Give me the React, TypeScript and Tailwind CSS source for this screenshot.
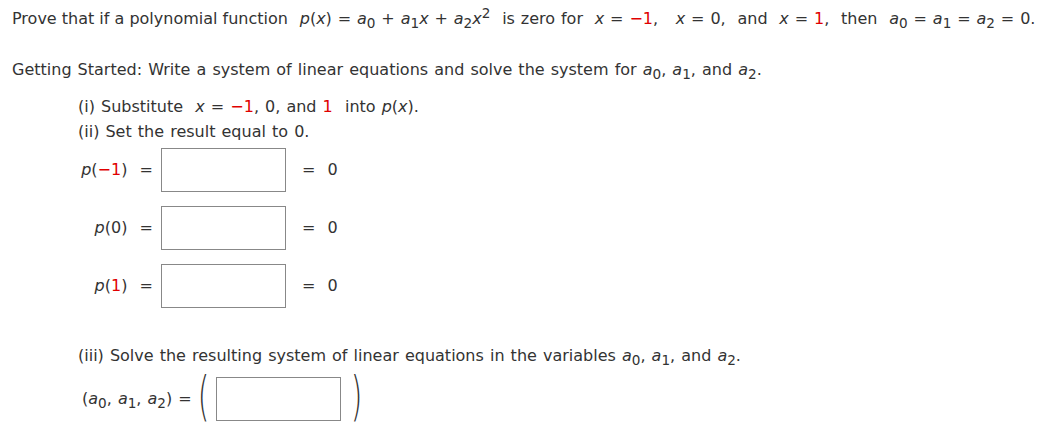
import React from "react";

const R = ({ children }: { children: React.ReactNode }) => (
  <span className="text-[#e00000]">{children}</span>
);
const I = ({ children }: { children: React.ReactNode }) => (
  <span className="italic">{children}</span>
);
const Sub = ({ children }: { children: React.ReactNode }) => (
  <span className="text-[0.85em] relative top-[0.3em] leading-none">{children}</span>
);
const Sup = ({ children }: { children: React.ReactNode }) => (
  <span className="text-[0.85em] relative -top-[0.45em] leading-none">{children}</span>
);

const Box = () => <div className="w-[125px] h-[44px] border border-[#888] bg-white" />;

const Paren = ({ c }: { c: string }) => (
  <span className="inline-block text-[54px] leading-[50px] font-light scale-x-[0.55] text-[#333]">
    {c}
  </span>
);

export default function App() {
  return (
    <div
      className="w-[1058px] h-[440px] bg-white text-[#333] text-[16px] leading-[24px] pl-[12px] pt-[7px] [word-spacing:1px]"
      style={{ fontFamily: '"DejaVu Sans", Verdana, sans-serif' }}
    >
      <p className="whitespace-nowrap">
        <span className="[word-spacing:0px]">Prove that if a polynomial function</span>
        <span className="[word-spacing:0.8px]">
          &nbsp; <I>p</I>(<I>x</I>) = <I>a</I>
          <Sub>0</Sub> + <I>a</I>
          <Sub>1</Sub>
          <I>x</I> + <I>a</I>
          <Sub>2</Sub>
          <I>x</I>
          <Sup>2</Sup>&nbsp; is zero for&nbsp; <I>x</I> = <R>−1</R>,&nbsp;&nbsp;{" "}
          <I>x</I> = 0,&nbsp; and&nbsp; <I>x</I> = <R>1</R>,&nbsp; then&nbsp;{" "}
          <I>a</I>
          <Sub>0</Sub> = <I>a</I>
          <Sub>1</Sub> = <I>a</I>
          <Sub>2</Sub> = 0.
        </span>
      </p>

      <p className="mt-[27px] whitespace-nowrap">
        Getting Started: Write a system of linear equations and solve the system
        for <I>a</I>
        <Sub>0</Sub>, <I>a</I>
        <Sub>1</Sub>, and <I>a</I>
        <Sub>2</Sub>.
      </p>

      <div className="pl-[66px] mt-[12px] leading-[25px]">
        <p className="whitespace-nowrap">
          (i) Substitute&nbsp; <I>x</I> = <R>−1</R>, 0, and <R>1</R>&nbsp; into{" "}
          <I>p</I>(<I>x</I>).
        </p>
        <p className="whitespace-nowrap">(ii) Set the result equal to 0.</p>
      </div>

      <div className="mt-[4px] flex flex-col gap-[14px]">
        {[
          <>
            <I>p</I>(<R>−1</R>)
          </>,
          <>
            <I>p</I>(0)
          </>,
          <>
            <I>p</I>(<R>1</R>)
          </>,
        ].map((lab, i) => (
          <div key={i} className="flex items-center">
            <div className="w-[141px] text-right whitespace-nowrap">
              {lab}&nbsp; =
            </div>
            <div className="ml-[8px]">
              <Box />
            </div>
            <div className="ml-[16px] whitespace-nowrap">=&nbsp; 0</div>
          </div>
        ))}
      </div>

      <div className="pl-[66px] mt-[36px]">
        <p className="whitespace-nowrap">
          (iii) Solve the resulting system of linear equations in the variables{" "}
          <I>a</I>
          <Sub>0</Sub>, <I>a</I>
          <Sub>1</Sub>, and <I>a</I>
          <Sub>2</Sub>.
        </p>
      </div>

      <div className="flex items-center mt-[8px] pl-[70px]">
        <div className="whitespace-nowrap">
          (<I>a</I>
          <Sub>0</Sub>, <I>a</I>
          <Sub>1</Sub>, <I>a</I>
          <Sub>2</Sub>) =
        </div>
        <div className="ml-[1px] -mt-[4px]">
          <Paren c="(" />
        </div>
        <div className="ml-[2px]">
          <Box />
        </div>
        <div className="ml-[5px] -mt-[4px]">
          <Paren c=")" />
        </div>
      </div>
    </div>
  );
}
